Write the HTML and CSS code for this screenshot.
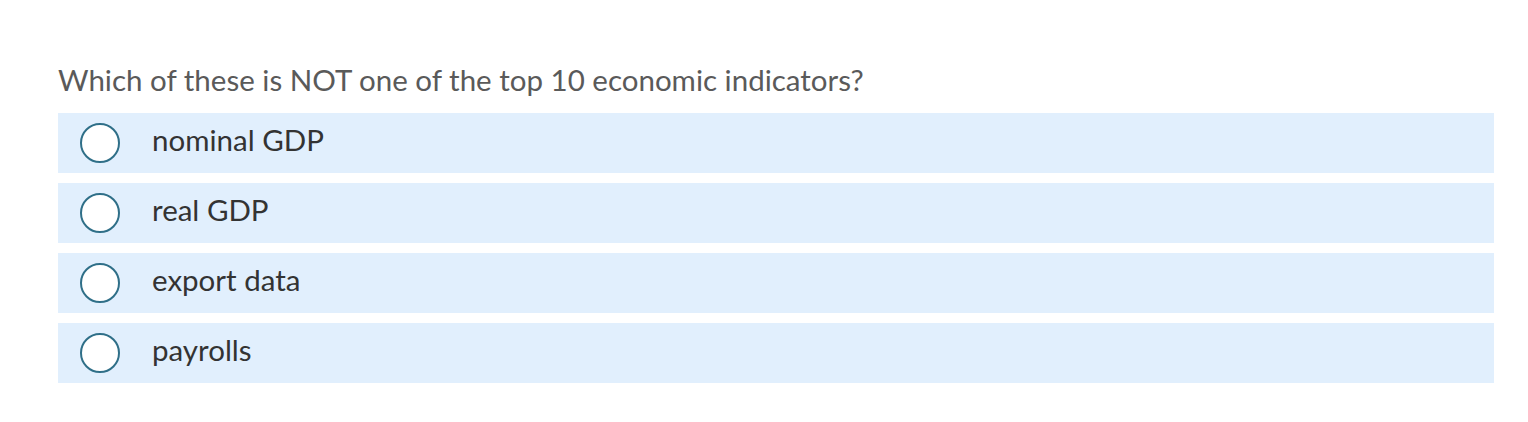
FILE: index.html
```html
<!DOCTYPE html>
<html>
<head>
<meta charset="utf-8">
<link rel="stylesheet" href="styles.css">
</head>
<body>
<div class="quiz">
  <p class="question">Which of these is NOT one of the top 10 economic indicators?</p>
  <ul class="options">
    <li class="option"><span class="radio"></span><span class="label">nominal GDP</span></li>
    <li class="option"><span class="radio"></span><span class="label">real GDP</span></li>
    <li class="option"><span class="radio"></span><span class="label">export data</span></li>
    <li class="option"><span class="radio"></span><span class="label">payrolls</span></li>
  </ul>
</div>
</body>
</html>
```
FILE: styles.css
```css
html, body {
  margin: 0;
  padding: 0;
  background: #ffffff;
}
.quiz {
  padding: 62px 34px 0 58px;
  font-family: Lato, "Liberation Sans", sans-serif;
}
.question {
  margin: 0 0 15px 0;
  font-size: 29.5px;
  line-height: 36px;
  color: #5a5a5a;
}
.options {
  list-style: none;
  margin: 0;
  padding: 0;
  display: flex;
  flex-direction: column;
  gap: 10px;
}
.option {
  height: 60px;
  background: #e1effd;
  display: flex;
  align-items: center;
  padding-left: 22px;
}
.radio {
  width: 36px;
  height: 36px;
  border: 2px solid #2f6f88;
  border-radius: 50%;
  background: #ffffff;
  flex: none;
}
.label {
  margin-left: 32px;
  font-size: 29.5px;
  line-height: 36px;
  color: #333333;
  position: relative;
  top: -3px;
}
```
